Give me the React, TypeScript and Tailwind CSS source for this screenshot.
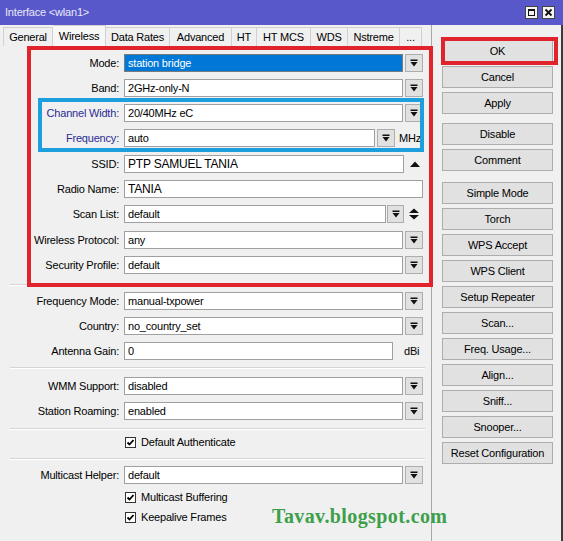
import React from 'react';
import clsx from 'clsx';

const DropIcon = () => (
  <svg width="8" height="8" viewBox="0 0 8 8">
    <path d="M0.5 0.5h7v1.6h-7z M0.5 3h7L4 7.5z" fill="#111" />
  </svg>
);

const DropBtn = ({ w = 'w-[18px]' }: { w?: string }) => (
  <div className={clsx('flex h-[18px] items-center justify-center border border-[#adadad] bg-[#e1e1e1]', w)}>
    <DropIcon />
  </div>
);

function Field({ w, sel, big, children }: { w: string; sel?: boolean; big?: boolean; children?: React.ReactNode }) {
  return (
    <div
      className={clsx(
        'flex h-[18px] items-center border pl-[3px] leading-none',
        sel ? 'border-[#7a7a7a] bg-[#0078d7] text-white' : 'border-[#a0a0a0] bg-white text-black',
        big ? 'text-[12px]' : 'text-[11px]',
        w
      )}
    >
      {children}
    </div>
  );
}

function Row({ label, blue, className, children }: { label: string; blue?: boolean; className?: string; children: React.ReactNode }) {
  return (
    <div className={clsx('flex h-[18px] items-center', className)}>
      <div className={clsx('w-[119px] text-right leading-none', blue ? 'text-[#2b2b96]' : 'text-black')}>{label}</div>
      <div className="ml-[5px] flex h-full items-center">{children}</div>
    </div>
  );
}

const SelectRow = ({ label, value, blue, sel, className }: { label: string; value: string; blue?: boolean; sel?: boolean; className?: string }) => (
  <Row label={label} blue={blue} className={className}>
    <Field w="w-[279px]" sel={sel}>{value}</Field>
    <div className="ml-[2px]">
      <DropBtn />
    </div>
  </Row>
);

const Sep = ({ className }: { className?: string }) => (
  <div className={clsx('ml-[10px] h-[2px] w-[415px] border-t border-b border-t-[#d5d5d5] border-b-white', className)} />
);

const CheckBox = ({ label, className }: { label: string; className?: string }) => (
  <div className={clsx('ml-[125px] flex h-[13px] items-center gap-[5px]', className)}>
    <div className="flex h-[11px] w-[11px] items-center justify-center border border-[#333] bg-white">
      <svg width="9" height="9" viewBox="0 0 9 9">
        <path d="M1.5 4.5l2 2 4-4.5" stroke="#000" strokeWidth="1.8" fill="none" />
      </svg>
    </div>
    <span className="leading-none">{label}</span>
  </div>
);

const Btn = ({ label }: { label: string }) => (
  <div className="flex h-[22px] w-[111px] items-center justify-center border border-[#adadad] bg-[#e1e1e1] leading-none">
    {label}
  </div>
);

const tabs = [
  { name: 'General', w: 'w-[50px]' },
  { name: 'Wireless', w: 'w-[53px]', active: true },
  { name: 'Data Rates', w: 'w-[64px]' },
  { name: 'Advanced', w: 'w-[62px]' },
  { name: 'HT', w: 'w-[25px]' },
  { name: 'HT MCS', w: 'w-[54px]' },
  { name: 'WDS', w: 'w-[37px]' },
  { name: 'Nstreme', w: 'w-[52px]' },
  { name: '...', w: 'w-[22px]' },
];

export default function App() {
  return (
    <div className="relative h-[541px] w-[563px] overflow-hidden bg-[#f0f0f0] font-['Liberation_Sans',Arial,sans-serif] text-[11px] tracking-[-0.2px] text-black">
      {/* title bar */}
      <div className="flex h-[25px] items-center justify-between bg-[#5858cb] pl-[5px] pr-[8px]">
        <span className="text-[11px] leading-none text-[#e8e8f4]">Interface &lt;wlan1&gt;</span>
        <div className="flex gap-[4px]">
          <div className="flex h-[13px] w-[13px] items-center justify-center border border-[#444] bg-[#f4f4f4]">
            <div className="h-[7px] w-[7px] border border-t-2 border-[#111]" />
          </div>
          <div className="flex h-[13px] w-[13px] items-center justify-center border border-[#444] bg-[#f4f4f4]">
            <svg width="9" height="9" viewBox="0 0 9 9">
              <path d="M1.5 1.5l6 6M7.5 1.5l-6 6" stroke="#111" strokeWidth="1.8" />
            </svg>
          </div>
        </div>
      </div>

      <div className="flex h-[516px]">
        {/* left panel */}
        <div className="w-[432px] border-r border-[#a8a8a8]">
          <div className="flex h-[21px] items-end pl-[3px]">
            {tabs.map((t, i) => (
              <div
                key={t.name}
                className={clsx(
                  'flex items-center justify-center border-t border-r border-[#d0d0d0] leading-none',
                  i === 0 && 'border-l',
                  t.active ? 'h-[21px] bg-[#f7f7f7]' : 'h-[19px] bg-[#f0f0f0]',
                  t.w
                )}
              >
                {t.name}
              </div>
            ))}
          </div>

          <div className="flex flex-col pt-[8px]">
            <SelectRow label="Mode:" value="station bridge" sel />
            <SelectRow label="Band:" value="2GHz-only-N" className="mt-[7px]" />
            <SelectRow label="Channel Width:" value="20/40MHz eC" blue className="mt-[7px]" />
            <Row label="Frequency:" blue className="mt-[7px]">
              <Field w="w-[251px]">auto</Field>
              <div className="ml-[2px]">
                <DropBtn />
              </div>
              <span className="ml-[4px] leading-none">MHz</span>
            </Row>
            <Row label="SSID:" className="mt-[8px]">
              <Field w="w-[280px]" big>PTP SAMUEL TANIA</Field>
              <svg className="ml-[6px]" width="10" height="6" viewBox="0 0 10 6">
                <path d="M0 6L5 0.5 10 6z" fill="#111" />
              </svg>
            </Row>
            <Row label="Radio Name:" className="mt-[7px]">
              <Field w="w-[299px]" big>TANIA</Field>
            </Row>
            <Row label="Scan List:" className="mt-[7px]">
              <Field w="w-[262px]">default</Field>
              <div className="ml-[1px]">
                <DropBtn w="w-[17px]" />
              </div>
              <svg className="ml-[5px]" width="10" height="12" viewBox="0 0 10 12">
                <path d="M0 5L5 0.5 10 5z M0 7h10L5 11.5z" fill="#111" />
              </svg>
            </Row>
            <SelectRow label="Wireless Protocol:" value="any" className="mt-[8px]" />
            <SelectRow label="Security Profile:" value="default" className="mt-[7px]" />

            <Sep className="mt-[10px]" />
            <SelectRow label="Frequency Mode:" value="manual-txpower" className="mt-[6px]" />
            <SelectRow label="Country:" value="no_country_set" className="mt-[7px]" />
            <Row label="Antenna Gain:" className="mt-[7px]">
              <Field w="w-[269px]">0</Field>
              <span className="ml-[11px] leading-none">dBi</span>
            </Row>

            <Sep className="mt-[7px]" />
            <SelectRow label="WMM Support:" value="disabled" className="mt-[8px]" />
            <SelectRow label="Station Roaming:" value="enabled" className="mt-[7px]" />

            <Sep className="mt-[8px]" />
            <CheckBox label="Default Authenticate" className="mt-[6px]" />

            <Sep className="mt-[9px]" />
            <SelectRow label="Multicast Helper:" value="default" className="mt-[6px]" />
            <CheckBox label="Multicast Buffering" className="mt-[7px]" />
            <CheckBox label="Keepalive Frames" className="mt-[7px]" />
          </div>
        </div>

        {/* buttons column */}
        <div className="flex-1 border-r-2 border-[#3a3a3a] pl-[10px] pt-[15px]">
          <div className="flex flex-col gap-[4px]">
            <Btn label="OK" />
            <Btn label="Cancel" />
            <Btn label="Apply" />
          </div>
          <div className="mt-[9px] flex flex-col gap-[4px]">
            <Btn label="Disable" />
            <Btn label="Comment" />
          </div>
          <div className="mt-[11px] flex flex-col gap-[4px]">
            {['Simple Mode', 'Torch', 'WPS Accept', 'WPS Client', 'Setup Repeater', 'Scan...', 'Freq. Usage...', 'Align...', 'Sniff...', 'Snooper...', 'Reset Configuration'].map(b => (
              <Btn key={b} label={b} />
            ))}
          </div>
        </div>
      </div>

      {/* annotation overlays */}
      <div className="pointer-events-none absolute left-[27px] top-[46px] h-[241px] w-[406px] border-4 border-[#e1232b]" />
      <div className="pointer-events-none absolute left-[38px] top-[98px] h-[54px] w-[386px] border-4 border-[#1c9fdc]" />
      <div className="pointer-events-none absolute left-[441px] top-[37px] h-[28px] w-[117px] border-4 border-[#e1232b]" />
      <div className="absolute left-[272px] top-[506px] font-['Liberation_Serif',serif] text-[20px] font-bold leading-none tracking-[0.4px] text-[#3e9f4a]">
        Tavav.blogspot.com
      </div>
    </div>
  );
}
